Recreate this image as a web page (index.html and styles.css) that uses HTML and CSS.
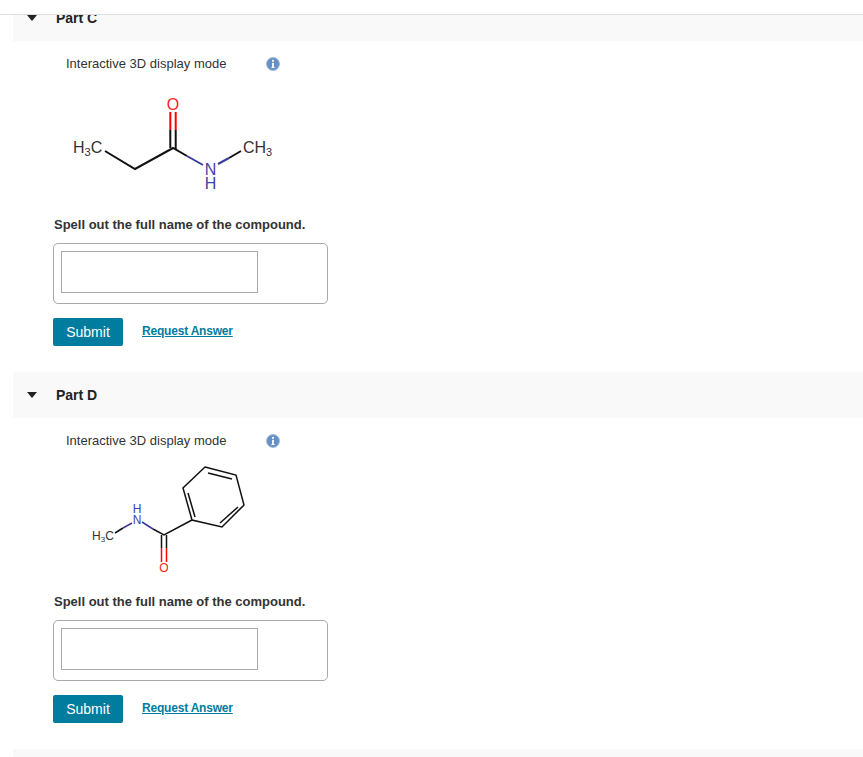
FILE: index.html
```html
<!DOCTYPE html>
<html lang="en">
<head>
    <meta charset="UTF-8">
    <meta name="viewport" content="width=device-width, initial-scale=1.0">
    <title>Parts C and D</title>
    <link rel="stylesheet" href="styles.css">
</head>
<body>
    <div class="top-rule"></div>

    <main class="parts">
        <!-- Part C, scrolled so its heading is cut off by the top rule -->
        <div class="part-head part-head-cut">
            <span class="caret"></span>
            <h2>Part C</h2>
        </div>
        <section class="part-body">
            <div class="mode-row">
                <span>Interactive 3D display mode</span>
                <svg class="info-icon" viewBox="0 0 14 14" aria-label="Information">
                    <circle cx="7" cy="7" r="6.5" fill="#6490c6" stroke="#a3bfe0"/>
                    <circle cx="7" cy="3.8" r="1.1" fill="#fff"/>
                    <rect x="6.1" y="5.8" width="1.8" height="4.6" fill="#fff"/>
                    <rect x="5.4" y="10" width="3.2" height="1" fill="#fff"/>
                </svg>
            </div>
            <svg class="molecule" viewBox="53 73 240 143">
                <g class="bond-black">
                    <polyline points="105,151 135,169 173,148 187,156"/>
                    <line x1="170.3" y1="148" x2="170.3" y2="130"/>
                    <line x1="175.7" y1="149" x2="175.7" y2="130"/>
                    <line x1="229" y1="158" x2="241" y2="151"/>
                </g>
                <g class="bond-blue">
                    <line x1="187" y1="156" x2="203" y2="165"/>
                    <line x1="218" y1="164" x2="229" y2="158"/>
                </g>
                <g class="bond-red">
                    <line x1="170.3" y1="130" x2="170.3" y2="112"/>
                    <line x1="175.7" y1="130" x2="175.7" y2="112"/>
                </g>
                <text class="atom" x="73" y="153">H<tspan class="sub" dy="3">3</tspan><tspan dy="-3">C</tspan></text>
                <text class="atom" x="243" y="153">CH<tspan class="sub" dy="3">3</tspan></text>
                <text class="atom atom-o" x="173" y="110" text-anchor="middle">O</text>
                <text class="atom atom-n" x="210.5" y="175" text-anchor="middle">N</text>
                <text class="atom atom-n" x="210.5" y="189" text-anchor="middle">H</text>
            </svg>
            <p class="question">Spell out the full name of the compound.</p>
            <div class="answer-box">
                <input class="answer-input" type="text">
            </div>
            <div class="actions">
                <button class="submit-btn" type="button">Submit</button>
                <a class="request-link" href="#">Request Answer</a>
            </div>
        </section>

        <div class="part-head">
            <span class="caret"></span>
            <h2>Part D</h2>
        </div>
        <section class="part-body">
            <div class="mode-row">
                <span>Interactive 3D display mode</span>
                <svg class="info-icon" viewBox="0 0 14 14" aria-label="Information">
                    <circle cx="7" cy="7" r="6.5" fill="#6490c6" stroke="#a3bfe0"/>
                    <circle cx="7" cy="3.8" r="1.1" fill="#fff"/>
                    <rect x="6.1" y="5.8" width="1.8" height="4.6" fill="#fff"/>
                    <rect x="5.4" y="10" width="3.2" height="1" fill="#fff"/>
                </svg>
            </div>
            <svg class="molecule molecule-thin" viewBox="53 450 240 143">
                <g class="bond-black">
                    <polygon points="205,467 236,475 244,505 222,527 192,520 183,488"/>
                    <line x1="208" y1="473" x2="232" y2="479"/>
                    <line x1="238" y1="507" x2="220" y2="523"/>
                    <line x1="188" y1="493" x2="195" y2="517"/>
                    <polyline points="192,520 164,535 153,529"/>
                    <line x1="161.5" y1="535" x2="161.5" y2="548"/>
                    <line x1="166.5" y1="535" x2="166.5" y2="548"/>
                    <line x1="123" y1="528" x2="115" y2="533"/>
                </g>
                <g class="bond-blue">
                    <line x1="153" y1="529" x2="142" y2="522"/>
                    <line x1="132" y1="523" x2="123" y2="528"/>
                </g>
                <g class="bond-red">
                    <line x1="161.5" y1="548" x2="161.5" y2="562"/>
                    <line x1="166.5" y1="548" x2="166.5" y2="562"/>
                </g>
                <text class="atom atom-small" x="92" y="540">H<tspan class="sub-small" dy="2">3</tspan><tspan dy="-2">C</tspan></text>
                <text class="atom atom-small atom-n" x="137" y="524" text-anchor="middle">N</text>
                <text class="atom atom-small atom-n" x="137" y="513" text-anchor="middle">H</text>
                <text class="atom atom-small atom-o" x="164" y="572" text-anchor="middle">O</text>
            </svg>
            <p class="question">Spell out the full name of the compound.</p>
            <div class="answer-box">
                <input class="answer-input" type="text">
            </div>
            <div class="actions">
                <button class="submit-btn" type="button">Submit</button>
                <a class="request-link" href="#">Request Answer</a>
            </div>
        </section>

        <div class="part-end"></div>
    </main>
</body>
</html>
```

FILE: styles.css
```css
body {
    font-family: "Liberation Sans", Arial, sans-serif;
    margin: 0;
    padding: 0;
    background-color: #fff;
    color: #333;
    font-size: 13px;
}

.top-rule {
    height: 14px;
    border-bottom: 1px solid #e0e0e0;
}

.parts {
    padding-left: 13px;
}

.part-head {
    display: flex;
    align-items: center;
    gap: 19px;
    height: 46px;
    padding-left: 14px;
    background-color: #f9f9f9;
}

/* only the lower part of this heading is in view */
.part-head-cut {
    height: 26px;
    align-items: flex-end;
    overflow: hidden;
    padding-bottom: 14px;
    box-sizing: border-box;
}

.part-end {
    height: 8px;
    background-color: #f9f9f9;
}

.part-head h2 {
    margin: 0;
    font-size: 14px;
    line-height: 18px;
    font-weight: bold;
    color: #222;
}

.caret {
    width: 0;
    height: 0;
    border-left: 5.5px solid transparent;
    border-right: 5.5px solid transparent;
    border-top: 6px solid #222;
}

.part-head-cut .caret {
    margin-bottom: 6px;
}

.part-body {
    padding-left: 40px;
    padding-bottom: 26px;
}

.mode-row {
    display: flex;
    align-items: center;
    gap: 40px;
    padding-top: 14px;
    margin-left: 13px;
    line-height: 18px;
}

.info-icon {
    width: 14px;
    height: 14px;
}

.molecule {
    display: block;
    width: 240px;
    height: 143px;
}

.bond-black, .bond-blue, .bond-red {
    fill: none;
    stroke-width: 2;
}

.molecule-thin .bond-black, .molecule-thin .bond-blue, .molecule-thin .bond-red {
    stroke-width: 1.5;
}

.bond-black {
    stroke: #111;
}

.bond-blue {
    stroke: #3a3a9c;
}

.bond-red {
    stroke: #f00;
}

.atom {
    font-size: 16px;
    fill: #333;
}

.atom-small {
    font-size: 12px;
}

.atom-o {
    fill: #f22;
}

.atom-n {
    fill: #4040a8;
}

.sub {
    font-size: 11px;
}

.sub-small {
    font-size: 8px;
}

.question {
    margin: 0 0 9px 1px;
    font-size: 13px;
    line-height: 18px;
    font-weight: bold;
}

.answer-box {
    box-sizing: border-box;
    width: 275px;
    height: 61px;
    padding: 7px;
    border: 1px solid #aaa;
    border-radius: 5px;
}

.answer-input {
    display: block;
    box-sizing: border-box;
    width: 197px;
    height: 42px;
    border: 1px solid #aaa;
    padding: 0 4px;
    background: #fff;
}

.actions {
    display: flex;
    align-items: center;
    gap: 19px;
    margin-top: 14px;
}

.submit-btn {
    width: 70px;
    height: 28px;
    padding: 0;
    border: none;
    border-radius: 2px;
    background-color: #007c9f;
    color: #fff;
    font-family: inherit;
    font-size: 14px;
    cursor: pointer;
}

.request-link {
    position: relative;
    top: -1px;
    font-size: 12px;
    letter-spacing: -0.2px;
    font-weight: bold;
    color: #007c9f;
}
```
